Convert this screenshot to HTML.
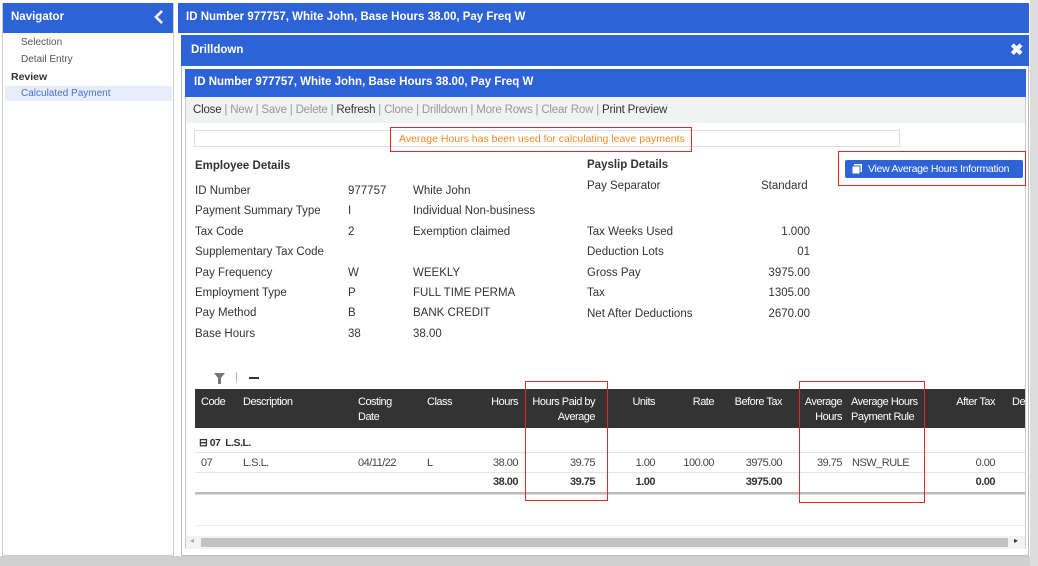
<!DOCTYPE html>
<html><head><meta charset="utf-8"><style>
*{margin:0;padding:0;box-sizing:border-box}
body{width:1038px;height:566px;background:#fff;position:relative;overflow:hidden;font-family:"Liberation Sans",sans-serif;font-size:12px;color:#333}
.a{position:absolute;white-space:nowrap}
.blue{background:#2e63d8;color:#fff;font-weight:bold}
.n{font-family:"Liberation Sans",sans-serif;font-size:11px;letter-spacing:-0.5px}
.r{text-align:right}
.rb{position:absolute;border:1.5px solid #e02a2a}
.tb span{color:#999}
.tb b{font-weight:normal;color:#333}
</style></head><body>
<div class="a" style="left:0;top:556px;width:1038px;height:10px;background:#d0d0d0"></div>
<div class="a" style="left:1030px;top:0;width:8px;height:566px;background:#dcdcdc"></div>
<div class="a" style="left:2px;top:3px;width:172px;height:553px;border:1px solid #ccc;background:#fff"></div>
<div class="a blue" style="left:3px;top:3px;width:170px;height:30px;padding:8px 8px;font-size:11.5px">Navigator</div>
<svg class="a" style="left:154px;top:10px" width="10" height="14"><path d="M8 1L2 7l6 6" stroke="#fff" stroke-width="2.6" fill="none"/></svg>
<div class="a" style="left:21px;top:37px;font-size:10px;color:#555">Selection</div>
<div class="a" style="left:21px;top:54px;font-size:10px;color:#555">Detail Entry</div>
<div class="a" style="left:11px;top:71px;font-size:10.5px;font-weight:bold;color:#333">Review</div>
<div class="a" style="left:5px;top:86px;width:167px;height:15px;background:#e8eef9"></div>
<div class="a" style="left:21px;top:88px;font-size:10px;color:#4a6fc9">Calculated Payment</div>
<div class="a blue" style="left:178px;top:3px;width:851px;height:30px;padding:8px 8px;font-size:11.5px">ID Number 977757, White John, Base Hours 38.00, Pay Freq W</div>
<div class="a" style="left:181px;top:35px;width:848px;height:521px;background:#fff;border:1px solid #bbb"></div>
<div class="a blue" style="left:181px;top:35px;width:848px;height:31px;padding:9px 10px;font-size:11.5px">Drilldown</div>
<div class="a" style="left:1010px;top:40px;color:#fff;font-size:16px;font-weight:bold">✖</div>
<div class="a" style="left:185px;top:69px;width:841px;height:480px;border:1px solid #ccc"></div>
<div class="a blue" style="left:185px;top:69px;width:841px;height:28px;padding:7px 9px;font-size:11.5px">ID Number 977757, White John, Base Hours 38.00, Pay Freq W</div>
<div class="a" style="left:186px;top:97px;width:839px;height:26px;background:#f1f2f2"></div>
<div class="a tb" style="left:193px;top:104px;font-size:11.5px;color:#999;letter-spacing:-0.2px"><b>Close</b> | <span>New</span> | <span>Save</span> | <span>Delete</span> | <b>Refresh</b> | <span>Clone</span> | <span>Drilldown</span> | <span>More Rows</span> | <span>Clear Row</span> | <b>Print Preview</b></div>
<div class="a" style="left:194px;top:130px;width:706px;height:17px;border:1px solid #ddd"></div>
<div class="a" style="left:399px;top:133px;font-size:10.5px;color:#f08a24">Average Hours has been used for calculating leave payments</div>
<div class="rb" style="left:390px;top:127px;width:302px;height:25px"></div>
<div class="a" style="left:195px;top:160px;font-size:11.5px;font-weight:bold">Employee Details</div>
<div class="a" style="left:587px;top:159px;font-size:11.5px;font-weight:bold">Payslip Details</div>
<div class="a" style="left:195px;top:181px;font-size:11.5px;line-height:20.4px">ID Number<br>Payment Summary Type<br>Tax Code<br>Supplementary Tax Code<br>Pay Frequency<br>Employment Type<br>Pay Method<br>Base Hours</div>
<div class="a" style="left:348px;top:181px;font-size:11.5px;line-height:20.4px">977757<br>I<br>2<br><br>W<br>P<br>B<br>38</div>
<div class="a" style="left:413px;top:181px;font-size:11.5px;line-height:20.4px">White John<br>Individual Non-business<br>Exemption claimed<br><br>WEEKLY<br>FULL TIME PERMA<br>BANK CREDIT<br>38.00</div>
<div class="a" style="left:587px;top:180px;font-size:11.5px">Pay Separator</div>
<div class="a" style="left:761px;top:180px;font-size:11.5px">Standard</div>
<div class="a" style="left:587px;top:222px;font-size:11.5px;line-height:20.4px">Tax Weeks Used<br>Deduction Lots<br>Gross Pay<br>Tax<br>Net After Deductions</div>
<div class="a r" style="left:730px;width:80px;top:222px;font-size:11.5px;line-height:20.4px">1.000<br>01<br>3975.00<br>1305.00<br>2670.00</div>
<div class="a" style="left:845px;top:160px;width:178px;height:18px;background:#2e63d8;color:#fff;font-size:10.5px;padding:3px 0 0 23px;border-radius:2px;letter-spacing:-0.3px">View Average Hours Information</div>
<svg class="a" style="left:851px;top:163px" width="12" height="12"><rect x="3" y="1" width="8" height="8" fill="#fff"/><rect x="1" y="3" width="8" height="8" fill="#fff" stroke="#2e63d8" stroke-width="1"/></svg>
<div class="rb" style="left:838px;top:151px;width:188px;height:35px"></div>
<svg class="a" style="left:214px;top:373px" width="12" height="11"><path d="M0 0h11L7 5v6H4V5z" fill="#777"/></svg>
<div class="a" style="left:235px;top:371px;color:#aaa;font-size:11px">|</div>
<div class="a" style="left:249px;top:377px;width:10px;height:2px;background:#333"></div>
<div class="a" style="left:195px;top:389px;width:830px;height:39px;background:#333"></div>
<div class="a n" style="left:195px;top:395px;width:830px;color:#fff;line-height:15px">
<div class="a" style="left:6px">Code</div>
<div class="a" style="left:48px">Description</div>
<div class="a" style="left:163px">Costing<br>Date</div>
<div class="a" style="left:232px">Class</div>
<div class="a r" style="left:273px;width:50px">Hours</div>
<div class="a r" style="left:320px;width:80px">Hours Paid by<br>Average</div>
<div class="a r" style="left:410px;width:50px">Units</div>
<div class="a r" style="left:470px;width:49px">Rate</div>
<div class="a r" style="left:520px;width:67px">Before Tax</div>
<div class="a r" style="left:597px;width:50px">Average<br>Hours</div>
<div class="a" style="left:656px">Average Hours<br>Payment Rule</div>
<div class="a r" style="left:740px;width:60px">After Tax</div>
<div class="a" style="left:817px">De</div>
</div>
<div class="a n" style="left:199px;top:437px;font-size:10.5px;font-weight:bold">⊟ 07&nbsp; L.S.L.</div>
<div class="a" style="left:195px;top:452px;width:830px;border-top:1px solid #e5e5e5"></div>
<div class="a n" style="left:195px;top:457px;width:830px;color:#444">
<div class="a" style="left:6px">07</div>
<div class="a" style="left:48px">L.S.L.</div>
<div class="a" style="left:163px">04/11/22</div>
<div class="a" style="left:232px">L</div>
<div class="a r" style="left:273px;width:50px">38.00</div>
<div class="a r" style="left:320px;width:80px">39.75</div>
<div class="a r" style="left:410px;width:50px">1.00</div>
<div class="a r" style="left:470px;width:49px">100.00</div>
<div class="a r" style="left:520px;width:67px">3975.00</div>
<div class="a r" style="left:597px;width:50px">39.75</div>
<div class="a" style="left:657px">NSW_RULE</div>
<div class="a r" style="left:740px;width:60px">0.00</div>
</div>
<div class="a" style="left:195px;top:472px;width:830px;border-top:1px solid #e5e5e5"></div>
<div class="a n" style="left:195px;top:476px;width:830px;font-weight:bold">
<div class="a r" style="left:273px;width:50px">38.00</div>
<div class="a r" style="left:320px;width:80px">39.75</div>
<div class="a r" style="left:410px;width:50px">1.00</div>
<div class="a r" style="left:520px;width:67px">3975.00</div>
<div class="a r" style="left:740px;width:60px">0.00</div>
</div>
<div class="a" style="left:195px;top:492px;width:830px;height:3px;border-top:2px solid #bbb;border-bottom:1px solid #ddd"></div>
<div class="a" style="left:195px;top:525px;width:830px;border-top:1px solid #eee"></div>
<div class="rb" style="left:525px;top:381px;width:83px;height:120px"></div>
<div class="rb" style="left:799px;top:381px;width:126px;height:122px"></div>
<div class="a" style="left:186px;top:536px;width:839px;height:13px;background:#f3f3f3"></div>
<div class="a" style="left:201px;top:538px;width:807px;height:9px;background:#c2c2c2"></div>
<div class="a" style="left:190px;top:536px;font-size:8px;color:#aaa">◂</div>
<div class="a" style="left:1014px;top:536px;font-size:8px;color:#333">▸</div>
</body></html>
